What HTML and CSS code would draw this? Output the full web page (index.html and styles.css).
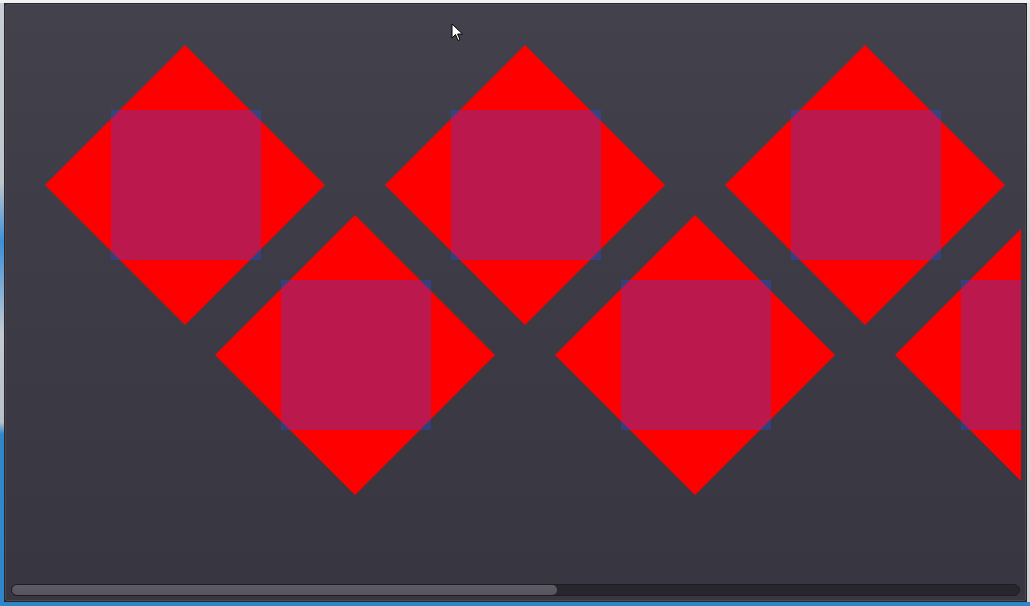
FILE: index.html
```html
<!DOCTYPE html>
<html>
<head>
<meta charset="utf-8">
<link rel="stylesheet" href="styles.css">
</head>
<body>
<div class="desk">
  <div class="left-edge"></div>
  <div class="window">
    <div class="frame">
      <div class="canvas">
        <svg class="scene" width="1015" height="576" viewBox="6 5 1015 576">
          <g fill="#ff0000">
            <polygon points="185,45 325,185 185,325 45,185"/>
            <polygon points="525,45 665,185 525,325 385,185"/>
            <polygon points="865,45 1005,185 865,325 725,185"/>
            <polygon points="355,215 495,355 355,495 215,355"/>
            <polygon points="695,215 835,355 695,495 555,355"/>
            <polygon points="1035,215 1175,355 1035,495 895,355"/>
          </g>
          <g fill="rgba(30,80,255,0.3)">
            <rect x="111" y="110" width="150" height="150"/>
            <rect x="451" y="110" width="150" height="150"/>
            <rect x="791" y="110" width="150" height="150"/>
            <rect x="281" y="280" width="150" height="150"/>
            <rect x="621" y="280" width="150" height="150"/>
            <rect x="961" y="280" width="150" height="150"/>
          </g>
        </svg>
        <svg class="cursor" width="13" height="19" viewBox="0 0 13 19">
          <path d="M1 1 L1 15 L4.5 11.5 L7 17.5 L9 16.6 L6.6 11 L11.5 11 Z" fill="#ffffff" stroke="#000000" stroke-width="1" stroke-linejoin="miter"/>
        </svg>
      </div>
      <div class="hscroll">
        <div class="track">
          <div class="thumb"></div>
        </div>
      </div>
    </div>
  </div>
  <div class="right-edge"></div>
</div>
<div class="taskbar"></div>
</body>
</html>
```

FILE: styles.css
```css
html, body {
  margin: 0;
  padding: 0;
  width: 1030px;
  height: 606px;
  overflow: hidden;
  background: #e9e9ea;
  font-family: "Liberation Sans", Arial, sans-serif;
}

.desk {
  display: flex;
  height: 602px;
  padding-top: 3px;
  box-sizing: border-box;
  background: #f2f2f2;
}

.left-edge {
  width: 4px;
  background: linear-gradient(180deg, #c9ced4 0%, #bfc5cc 30%, #3d8fd6 40%, #c4cad1 55%, #b9c0c8 70%, #2f86c8 72%, #2f86c8 100%);
}

.right-edge {
  width: 3px;
  background: linear-gradient(180deg, #e6e6e6 0%, #cfcfd2 40%, #dcdcdc 60%, #cfcfd2 100%);
}

.window {
  width: 1023px;
  height: 599px;
  background: #27262c;
  padding: 1px;
  box-sizing: border-box;
}

.frame {
  height: 100%;
  box-sizing: border-box;
  border: 1px solid #4b4a54;
  border-radius: 2px;
  background: linear-gradient(180deg, #43424c 0%, #3d3c46 45%, #383741 100%);
  display: flex;
  flex-direction: column;
}

.canvas {
  position: relative;
  flex: 1;
  overflow: hidden;
  width: 1015px;
}

.scene {
  display: block;
}

.cursor {
  position: absolute;
  left: 445px;
  top: 18px;
}

.hscroll {
  height: 20px;
  padding: 4px 0 0 5px;
  box-sizing: border-box;
}

.track {
  width: 1009px;
  height: 12px;
  box-sizing: border-box;
  background: #27262c;
  border: 1px solid #1e1d22;
  border-radius: 6px;
  display: flex;
}

.thumb {
  width: 545px;
  height: 100%;
  box-sizing: border-box;
  background: linear-gradient(180deg, #5e5d67 0%, #55545e 100%);
  border-radius: 5px;
}

.taskbar {
  height: 4px;
  background: #2e86c9;
}
```
